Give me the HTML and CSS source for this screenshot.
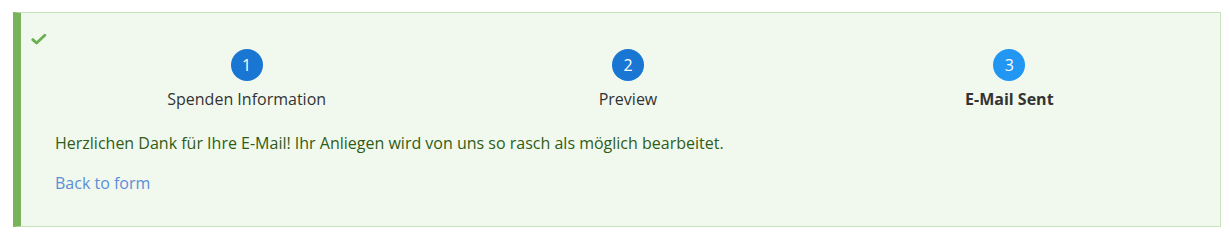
FILE: index.html
```html
<!DOCTYPE html>
<html lang="de">
<head>
<meta charset="utf-8">
<title>E-Mail Sent</title>
<link rel="stylesheet" href="styles.css">
</head>
<body>
<div class="page">
  <div class="alert">
    <div class="alert-icon">
      <svg width="16" height="16" viewBox="0 0 16 16"><path d="M1.8 6.6 L5.6 10 L13.8 2.2" fill="none" stroke="#6aaf50" stroke-width="2.8" stroke-linecap="round" stroke-linejoin="round"/></svg>
    </div>
    <div class="steps">
      <div class="step"><span class="num">1</span><span class="label">Spenden Information</span></div>
      <div class="step"><span class="num">2</span><span class="label">Preview</span></div>
      <div class="step active"><span class="num">3</span><span class="label">E-Mail Sent</span></div>
    </div>
    <p class="message">Herzlichen Dank für Ihre E-Mail! Ihr Anliegen wird von uns so rasch als möglich bearbeitet.</p>
    <a class="back" href="#">Back to form</a>
  </div>
</div>
</body>
</html>
```

FILE: styles.css
```css
* { box-sizing: border-box; }
html, body { margin: 0; padding: 0; background: #fff; }
body { font-family: "Open Sans", "Noto Sans", sans-serif; font-size: 16px; line-height: 24px; color: #333; }
.page { padding: 12px 9px 0 13px; }
.alert {
  width: 1208px;
  background: #f1f9ee;
  border: 1px solid #c6e3b9;
  border-left: 8px solid #76b35a;
  padding: 20px 20px 31px 34px;
}
.alert-icon { height: 16px; margin-left: -24px; }
.alert-icon svg { display: block; }
.steps { display: grid; grid-template-columns: repeat(3, 1fr); padding-left: 1px; }
.step { display: flex; flex-direction: column; align-items: center; }
.num {
  width: 32px; height: 32px; border-radius: 50%;
  background: #1976d2; color: #fff;
  display: flex; align-items: center; justify-content: center;
  font-size: 16px; line-height: 1;
}
.step.active .num { background: #2196f3; }
.label { margin-top: 6px; color: #333; }
.step.active .label { font-weight: 700; }
.message { margin: 20px 0 16px; color: #305c17; }
.back { display: block; color: #5b8ed6; text-decoration: none; }
```
